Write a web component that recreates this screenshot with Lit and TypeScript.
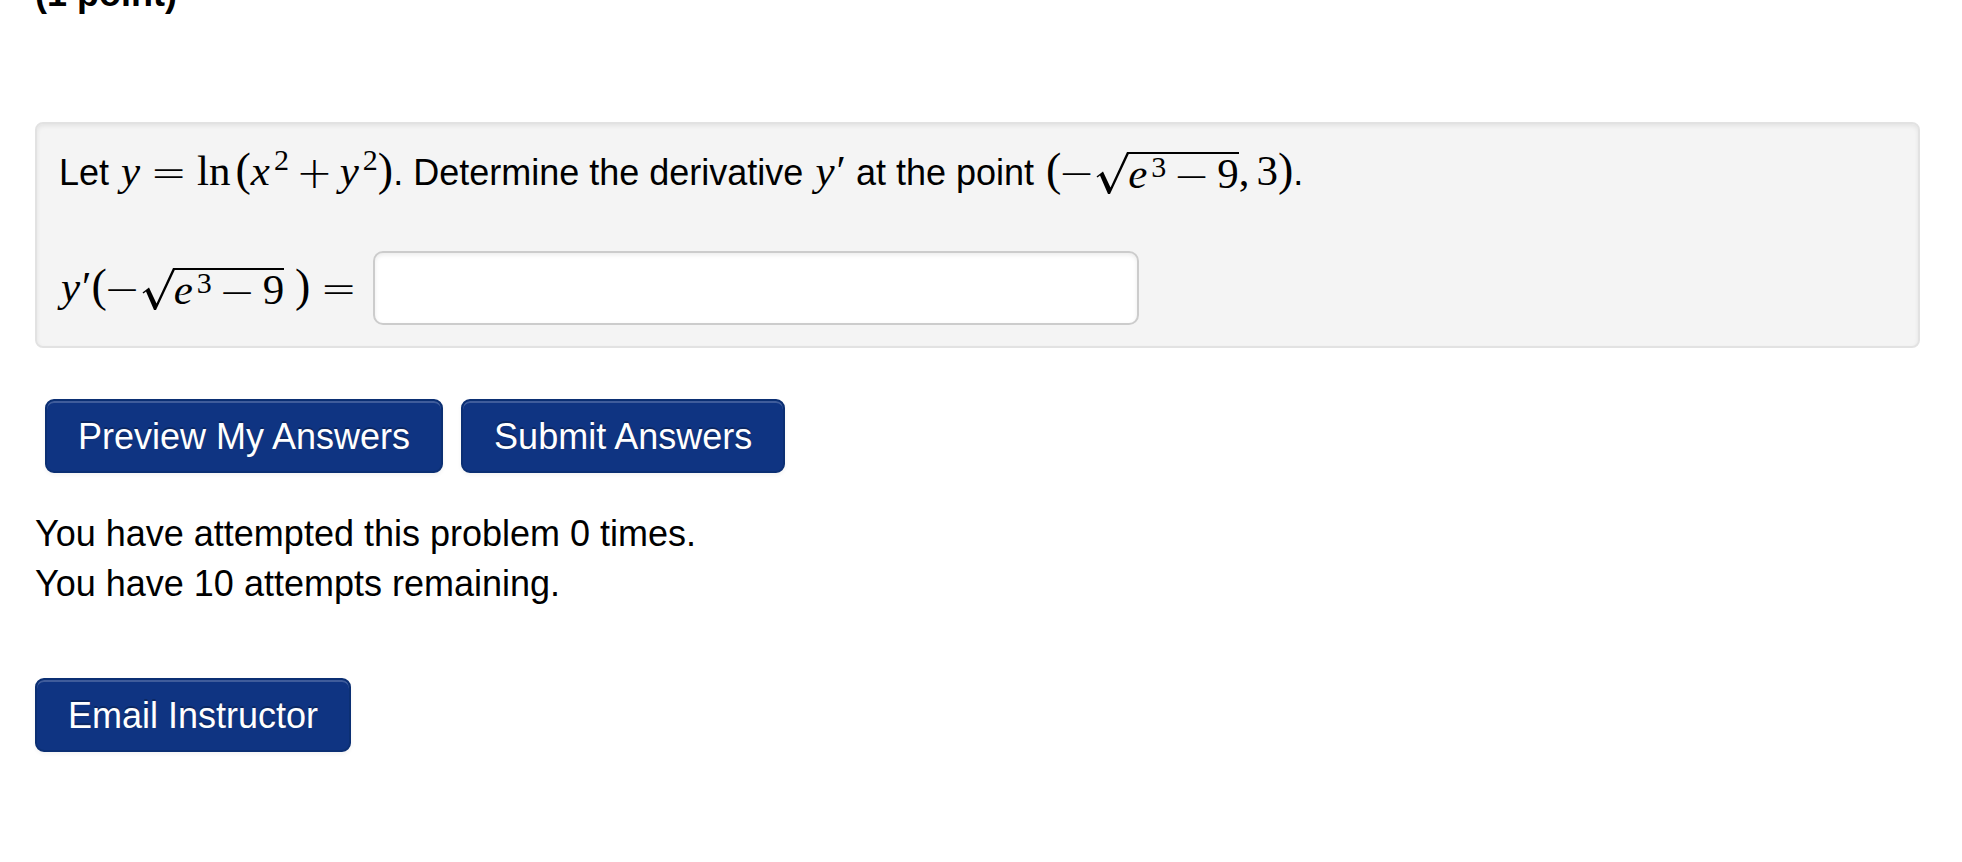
import { LitElement, html, css } from "lit";
import { customElement, property } from "lit/decorators.js";

/** Square root: the radical sign followed by its overlined content. */
@customElement("math-root")
class MathRoot extends LitElement {
  static styles = css`
    :host {
      display: inline-flex;
      vertical-align: -3px;
      margin-left: 1px;
    }
    .sign {
      display: block;
      width: 33px;
      height: 42px;
      margin-right: -1px;
      flex: none;
    }
    .body {
      align-self: baseline;
      border-top: 2px solid #000;
      line-height: 40px;
      white-space: nowrap;
    }
  `;
  render() {
    return html`<svg class="sign" viewBox="0 0 33 42" aria-hidden="true"><path d="M0.5 24.5 L7 19.5 L14.5 35.5 L31 0 L33 0 L33 1.5 L14 42 L12 42 L4 23.5 L1.5 25.5 Z" fill="#000" /></svg><span class="body"><slot></slot></span>`;
  }
}

@customElement("app-root")
class AppRoot extends LitElement {
  @property({ type: Number }) attempted = 0;
  @property({ type: Number }) remaining = 10;

  static styles = css`
    :host {
      display: block;
      overflow: hidden;
      padding: 0 42px 40px 35px;
      background: #fff;
      color: #000;
      font-family: "Liberation Sans", Arial, sans-serif;
      font-size: 36px;
      line-height: 50px;
    }
    * {
      box-sizing: border-box;
    }
    .points {
      margin: -31px 0 103px;
      font-size: 36px;
      font-weight: 700;
    }
    .problem {
      border: 2px solid #e2e2e2;
      border-radius: 8px;
      background: #f4f4f4;
      box-shadow: inset 0 2px 4px rgba(0, 0, 0, 0.07);
      padding: 24px 22px 21px;
    }
    .statement {
      margin: 0 0 53px;
    }
    .answer {
      display: flex;
      align-items: center;
      gap: 6px;
    }
    .field {
      width: 766px;
      max-width: 100%;
      height: 74px;
      border: 2px solid #ccc;
      border-radius: 10px;
      background: #fff;
      box-shadow: inset 0 2px 4px rgba(0, 0, 0, 0.08);
      padding: 8px 12px;
      font: inherit;
    }
    .math {
      font-family: "Liberation Serif", "Times New Roman", serif;
      font-size: 43px;
      white-space: nowrap;
      line-height: 40px;
      margin-left: 2px;
    }
    .sup {
      font-size: 30px;
      line-height: 0;
      vertical-align: 15px;
      margin-left: 4px;
    }
    math-root .sup {
      vertical-align: 11px;
    }
    .prime {
      margin-left: 2px;
    }
    .paren {
      font-size: 46px;
      line-height: 0;
    }
    .op {
      font-family: "DejaVu Sans Light", "DejaVu Sans", sans-serif;
      font-weight: 200;
      font-size: 44px;
      line-height: 0;
      vertical-align: -3px;
    }
    .lead {
      margin-left: -3px;
    }
    .binary {
      margin: 0 7px;
    }
    .rel {
      margin: 0 10px;
    }
    .fn {
      margin-right: 5px;
    }
    .comma {
      margin-right: 7px;
    }
    .actions {
      display: flex;
      flex-wrap: wrap;
      gap: 18px;
      margin: 51px 10px 36px;
    }
    .btn {
      height: 74px;
      border: 2px solid #0b2f73;
      border-radius: 9px;
      background: #0f3482;
      box-shadow: inset 0 2px 0 rgba(255, 255, 255, 0.2), 0 2px 4px rgba(0, 0, 0, 0.05);
      padding: 2px 31px 0;
      color: #fff;
      font: inherit;
      text-shadow: 0 -2px 0 rgba(0, 0, 0, 0.25);
      white-space: nowrap;
    }
    .attempts {
      margin: 0 0 69px;
    }
  `;

  render() {
    const prime = html`<i>y</i><span class="prime">′</span>`;
    const radicand = html`<i>e</i><span class="sup">3</span><span class="op binary">−</span>9`;
    return html`
      <h3 class="points">(1 point)</h3>
      <section class="problem">
        <p class="statement">
          Let <span class="math"><i>y</i><span class="op rel">=</span><span class="fn">ln</span><span class="paren">(</span><i>x</i><span class="sup">2</span><span class="op binary">+</span><i>y</i><span class="sup">2</span><span class="paren">)</span></span>. Determine the derivative <span class="math">${prime}</span> at the point <span class="math"><span class="paren">(</span><span class="op lead">−</span><math-root>${radicand}</math-root><span class="comma">,</span>3<span class="paren">)</span></span>.
        </p>
        <div class="answer">
          <label class="math" for="answer">${prime}<span class="paren">(</span><span class="op lead">−</span><math-root>${radicand}</math-root> <span class="paren">)</span><span class="op rel">=</span></label>
          <input class="field" id="answer" type="text" autocomplete="off" />
        </div>
      </section>
      <div class="actions">
        <button class="btn" type="button">Preview My Answers</button>
        <button class="btn" type="submit">Submit Answers</button>
      </div>
      <p class="attempts">
        You have attempted this problem ${this.attempted} times.<br />
        You have ${this.remaining} attempts remaining.
      </p>
      <button class="btn" type="button">Email Instructor</button>
    `;
  }
}
